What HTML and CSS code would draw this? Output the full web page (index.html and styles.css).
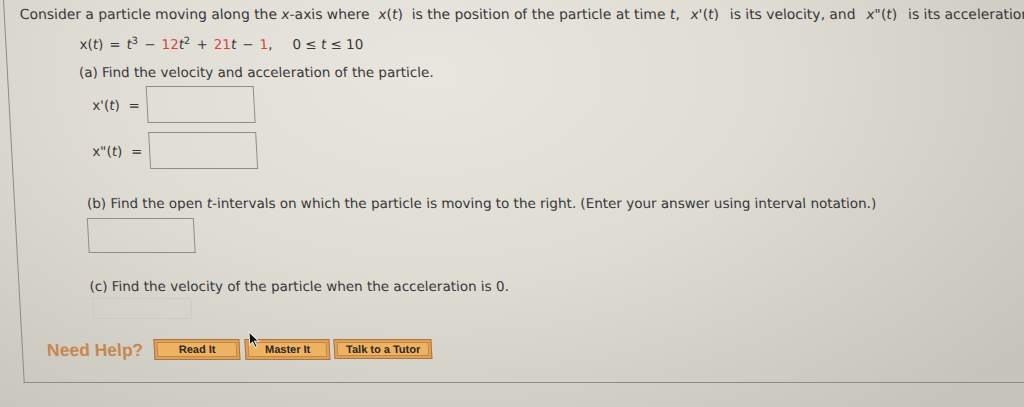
FILE: index.html
```html
<!DOCTYPE html>
<html>
<head>
<meta charset="utf-8">
<link rel="stylesheet" href="styles.css">
</head>
<body>
<div class="page">
  <div class="card">
    <p class="intro">Consider a particle moving along the <i>x</i>-axis where &nbsp;<i>x</i>(<i>t</i>)&nbsp; is the position of the particle at time <i>t</i>, &nbsp;<span class="m"><i>x</i>'(<i>t</i>)</span>&nbsp; is its velocity, and &nbsp;<span class="m"><i>x</i>"(<i>t</i>)</span>&nbsp; is its acceleration.</p>
    <div class="content">
      <p class="eq">x(<i>t</i>)<span class="op">=</span><i>t</i><sup>3</sup><span class="op">−</span><span class="red">12</span><i>t</i><sup>2</sup><span class="op">+</span><span class="red">21</span><i>t</i><span class="op">−</span><span class="red">1</span>,<span class="gap"></span>0 ≤ <i>t</i> ≤ 10</p>
      <p class="part">(a) Find the velocity and acceleration of the particle.</p>
      <div class="answers">
        <span class="label">x'(<i>t</i>)&nbsp; =</span>
        <span class="box box-lg"></span>
        <span class="label">x"(<i>t</i>)&nbsp; =</span>
        <span class="box box-lg"></span>
      </div>
      <p class="part part-b">(b) Find the open <i>t</i>-intervals on which the particle is moving to the right. (Enter your answer using interval notation.)</p>
      <span class="box box-b"></span>
      <p class="part part-c">(c) Find the velocity of the particle when the acceleration is 0.</p>
      <span class="box box-c"></span>
    </div>
    <div class="help">
      <span class="need">Need Help?</span>
      <span class="btn"><span class="btn-in">Read It</span></span>
      <span class="btn btn-m"><span class="btn-in">Master It</span></span>
      <span class="btn btn-t"><span class="btn-in">Talk to a Tutor</span></span>
    </div>
    <svg class="cursor" width="12" height="18" viewBox="0 0 12 18"><path d="M1 1 L1 14 L4 11 L6.5 16.5 L8.5 15.6 L6 10.3 L10.3 10.3 Z" fill="#111" stroke="#eee" stroke-width="1"/></svg>
  </div>
</div>
</body>
</html>
```
FILE: styles.css
```css
html, body {
  margin: 0;
  padding: 0;
  width: 1024px;
  height: 407px;
  overflow: hidden;
}
body {
  background: radial-gradient(ellipse 75% 110% at 42% 18%, #e9e6df 0%, #dfdcd4 45%, #cfccc3 80%, #c6c3ba 100%);
  font-family: "DejaVu Sans", Verdana, sans-serif;
  color: #383838;
}
.page {
  padding-left: 3px;
}
.card {
  position: relative;
  width: 1120px;
  height: 383px;
  box-sizing: border-box;
  border-left: 1px solid #8d8b86;
  border-bottom: 1px solid #8d8b86;
  transform: skewX(3.1deg);
  transform-origin: 0 0;
  padding-top: 5px;
}
p { margin: 0; }
.intro {
  font-size: 13.9px;
  line-height: 18px;
  padding-left: 15px;
  white-space: nowrap;
}
.m { padding: 0 2px; }
i { font-style: italic; }
.content {
  margin-left: 71px;
  font-size: 13.5px;
  line-height: 18px;
}
.eq {
  margin-top: 12px;
  margin-left: 2px;
  white-space: nowrap;
}
.op {
  padding: 0 6px;
}
.gap {
  display: inline-block;
  width: 20px;
}
.eq sup {
  font-size: 10px;
  line-height: 0;
  vertical-align: 5px;
}
.red { color: #d2463c; }
.part {
  margin-top: 10px;
  white-space: nowrap;
}
.answers {
  display: grid;
  grid-template-columns: 59px 108px;
  column-gap: 7px;
  row-gap: 9px;
  margin-top: 5px;
  align-items: center;
}
.label {
  text-align: right;
  white-space: nowrap;
}
.box {
  display: block;
  box-sizing: border-box;
  border: 1px solid #8f8d88;
  background: transparent;
}
.box-lg { height: 37px; }
.part-b { margin-top: 25px; margin-left: 1px; }
.box-b {
  width: 107px;
  height: 35px;
  margin-top: 6px;
}
.part-c { margin-top: 24px; margin-left: -1px; }
.box-c {
  width: 99px;
  height: 21px;
  margin-top: 3px;
  margin-left: 1px;
  border-color: #cdcac3;
}
.help {
  display: flex;
  align-items: center;
  margin-top: 19px;
  padding-left: 24px;
  height: 22px;
}
.need {
  font-family: "Liberation Sans", Arial, sans-serif;
  font-weight: bold;
  font-size: 17.5px;
  color: #c88651;
  margin-right: 11px;
  margin-top: 3px;
}
.btn {
  box-sizing: border-box;
  display: flex;
  width: 86px;
  height: 21px;
  padding: 2px;
  background: #e09f57;
  border: 1px solid #a9773f;
  margin-right: 5px;
}
.btn-m { width: 85px; margin-right: 4px; }
.btn-t { width: 98px; height: 20px; margin-top: -1px; }
.btn-in {
  flex: 1;
  display: flex;
  align-items: center;
  justify-content: center;
  background: #eeb263;
  border: 1px solid #c28848;
  font-family: "Liberation Sans", Arial, sans-serif;
  font-weight: bold;
  font-size: 11px;
  color: #2f281f;
}
.cursor {
  position: absolute;
  left: 226px;
  top: 331px;
}
```
